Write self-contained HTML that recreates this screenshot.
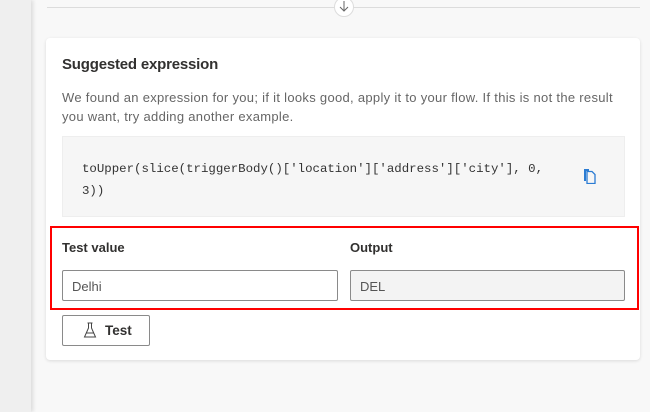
<!DOCTYPE html>
<html><head><style>
*{margin:0;padding:0;box-sizing:border-box}
body{width:650px;height:412px;overflow:hidden;background:#f8f8f8;font-family:"Liberation Sans",sans-serif;position:relative}
.strip{position:absolute;left:0;top:0;width:31px;height:412px;background:#efefef;box-shadow:2px 0 4px rgba(0,0,0,.12)}
.line{position:absolute;left:47px;top:7px;width:593px;height:1px;background:#dcdcdc}
.circ{position:absolute;left:334px;top:-3px;width:20px;height:20px;border-radius:50%;background:#fff;border:1px solid #dcdcdc}
.card{position:absolute;left:46px;top:38px;width:594px;height:322px;background:#fff;border-radius:4px;box-shadow:0 1px 3px rgba(0,0,0,.12)}
h1{position:absolute;left:62px;top:56px;font-size:15px;font-weight:600;color:#323130;letter-spacing:-0.2px}
p{position:absolute;left:62px;top:88px;white-space:nowrap;font-size:13px;line-height:19px;color:#666;letter-spacing:0.3px}
.code{position:absolute;left:62px;top:136px;width:563px;height:81px;background:#f6f6f6;border:1px solid #eee}
.ct{position:absolute;left:82px;top:158px;font-family:"Liberation Mono",monospace;font-size:12.4px;line-height:22px;color:#333}
.red{position:absolute;left:50px;top:226px;width:589px;height:84px;border:2px solid #f00}
.lab{position:absolute;top:240px;font-size:13px;font-weight:bold;color:#323130}
.inp{position:absolute;top:270px;height:31px;border:1px solid #8a8a8a;border-radius:2px;font-size:13px;color:#555;padding:8px 0 0 9px}
.btn{position:absolute;left:62px;top:315px;width:88px;height:31px;border:1px solid #8a8a8a;border-radius:2px;font-size:13.5px;font-weight:600;color:#323130}
</style></head><body>
<div class="strip"></div>
<div class="line"></div>
<div class="circ"><svg width="18" height="18" viewBox="0 0 18 18"><path d="M9 3v10M5 9l4 4 4-4" stroke="#666" fill="none" stroke-width="1"/></svg></div>
<div class="card"></div>
<h1>Suggested expression</h1>
<p>We found an expression for you; if it looks good, apply it to your flow. If this is not the result<br>you want, try adding another example.</p>
<div class="code"></div>
<div class="ct">toUpper(slice(triggerBody()['location']['address']['city'], 0,<br>3))</div>
<svg style="position:absolute;left:582px;top:168px" width="14" height="16" viewBox="0 0 14 16"><path d="M2 1h5v2H4v10h-2z" fill="#2b7cd3"/><path d="M5 3.5h5l3 3v9H5z" fill="none" stroke="#2b7cd3" stroke-width="1.3"/></svg>
<div class="red"></div>
<div class="lab" style="left:62px">Test value</div>
<div class="lab" style="left:350px">Output</div>
<div class="inp" style="left:62px;width:276px;background:#fff">Delhi</div>
<div class="inp" style="left:350px;width:275px;background:#f3f3f3">DEL</div>
<div class="btn"><svg style="position:absolute;left:20px;top:6px" width="14" height="17" viewBox="0 0 14 17"><path d="M4.5 1h5M5.5 1v5L1.5 15h11L8.5 6V1M3.5 11h7" fill="none" stroke="#444" stroke-width="1"/></svg><span style="position:absolute;left:42px;top:7px">Test</span></div>
</body></html>
